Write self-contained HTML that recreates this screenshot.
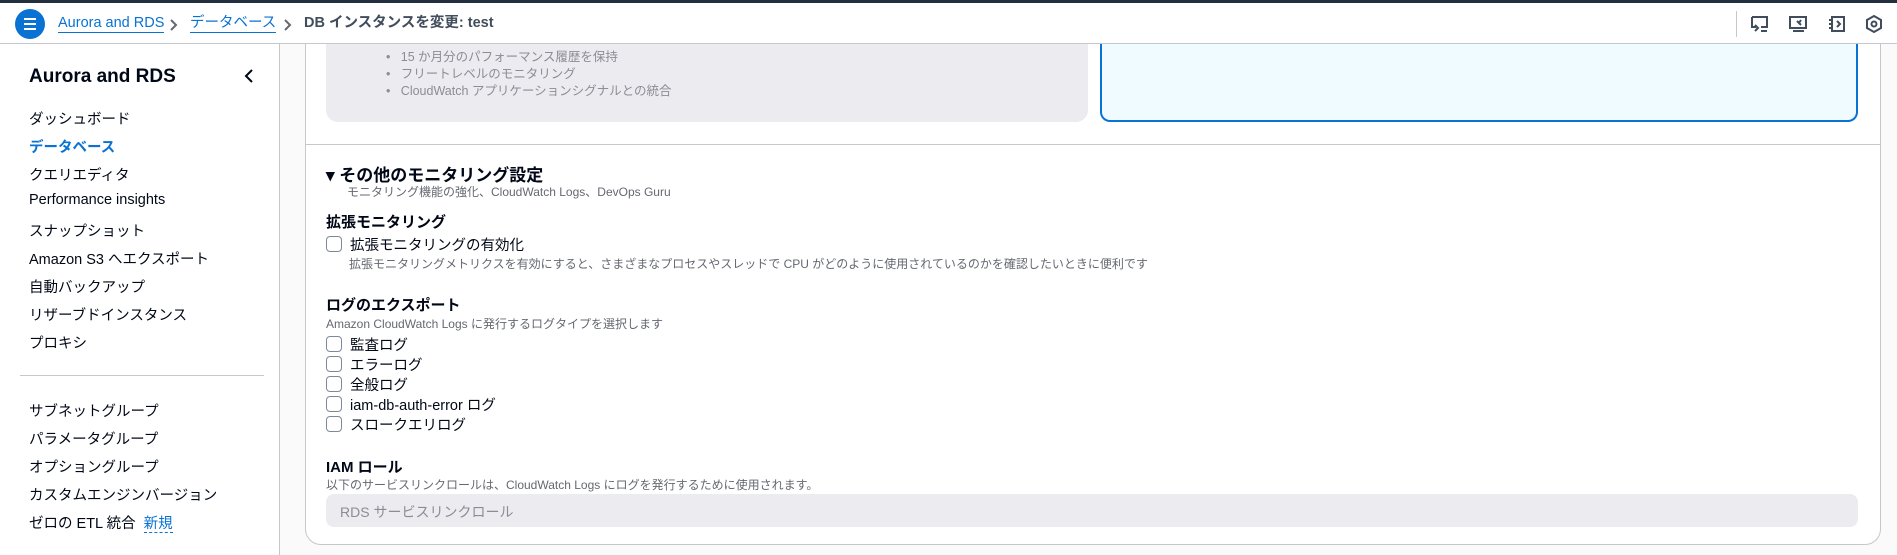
<!DOCTYPE html>
<html><head><meta charset="utf-8"><style>
*{box-sizing:border-box;margin:0;padding:0}
body{width:1897px;height:555px;overflow:hidden;background:#fafafa;font-family:"Liberation Sans","Noto Sans CJK JP",sans-serif;color:#000716;position:relative}
.a{position:absolute;white-space:nowrap}
.top{position:absolute;left:0;top:0;width:1897px;height:44px;background:#fff;border-top:3px solid #232f3e;border-bottom:1px solid #c6c6cd}
.side{position:absolute;left:0;top:44px;width:280px;height:511px;background:#fff;border-right:1px solid #c6c6cd}
.nav{font-size:14.5px;color:#000716;left:29px}
.card{position:absolute;left:305px;top:20px;width:1576px;height:525px;background:#fff;border:1px solid #c6c6cd;border-radius:16px}
.cb{position:absolute;left:326px;width:16px;height:16px;border:1.5px solid #7d8998;border-radius:4px;background:#fff}
.lbl{left:350px;font-size:14.5px}
.g{color:#656871;font-size:12px}
.h{font-weight:bold;font-size:15px;left:326px}
</style></head><body>
<div class="card"></div>
<div class="a" style="left:326px;top:20px;width:762px;height:102px;background:#ebebf0;border-radius:0 0 12px 12px"></div>
<div class="a" style="left:1100px;top:20px;width:758px;height:102px;background:#f0fbff;border:2px solid #0972d3;border-top:none;border-radius:0 0 10px 10px"></div>
<div class="a" style="left:386px;top:49px;font-size:12.5px;color:#8c8c94;line-height:17px">• &nbsp;&nbsp;15 か月分のパフォーマンス履歴を保持<br>• &nbsp;&nbsp;フリートレベルのモニタリング<br>• &nbsp;&nbsp;CloudWatch アプリケーションシグナルとの統合</div>
<div class="a" style="left:306px;top:144px;width:1574px;height:1px;background:#c6c6cd"></div>
<div class="a" style="left:326px;top:161px;font-size:17px;font-weight:bold">▾ その他のモニタリング設定</div>
<div class="a g" style="left:347px;top:183px">モニタリング機能の強化、CloudWatch Logs、DevOps Guru</div>
<div class="a h" style="top:211px">拡張モニタリング</div>
<div class="cb" style="top:236px"></div>
<div class="a lbl" style="top:234px">拡張モニタリングの有効化</div>
<div class="a g" style="left:349px;top:255px">拡張モニタリングメトリクスを有効にすると、さまざまなプロセスやスレッドで CPU がどのように使用されているのかを確認したいときに便利です</div>
<div class="a h" style="top:294px">ログのエクスポート</div>
<div class="a g" style="left:326px;top:315px">Amazon CloudWatch Logs に発行するログタイプを選択します</div>
<div class="cb" style="top:336px"></div><div class="a lbl" style="top:334px">監査ログ</div>
<div class="cb" style="top:356px"></div><div class="a lbl" style="top:354px">エラーログ</div>
<div class="cb" style="top:376px"></div><div class="a lbl" style="top:374px">全般ログ</div>
<div class="cb" style="top:396px"></div><div class="a lbl" style="top:394px">iam-db-auth-error ログ</div>
<div class="cb" style="top:416px"></div><div class="a lbl" style="top:414px">スロークエリログ</div>
<div class="a h" style="top:456px">IAM ロール</div>
<div class="a g" style="left:326px;top:476px">以下のサービスリンクロールは、CloudWatch Logs にログを発行するために使用されます。</div>
<div class="a" style="left:326px;top:494px;width:1532px;height:33px;background:#ebebf0;border-radius:8px"></div>
<div class="a" style="left:340px;top:502px;font-size:14px;color:#8c8c94">RDS サービスリンクロール</div>

<div class="side">
<div class="a" style="left:29px;top:22px;font-size:19px;font-weight:bold">Aurora and RDS</div>
<svg class="a" style="left:243px;top:24px" width="12" height="16"><path d="M9 2L3 8l6 6" stroke="#000716" stroke-width="2" fill="none"/></svg>
<div class="a nav" style="top:64px">ダッシュボード</div>
<div class="a nav" style="top:92px;color:#0972d3;font-weight:bold">データベース</div>
<div class="a nav" style="top:120px">クエリエディタ</div>
<div class="a nav" style="top:148px">Performance insights</div>
<div class="a nav" style="top:176px">スナップショット</div>
<div class="a nav" style="top:204px">Amazon S3 へエクスポート</div>
<div class="a nav" style="top:232px">自動バックアップ</div>
<div class="a nav" style="top:260px">リザーブドインスタンス</div>
<div class="a nav" style="top:288px">プロキシ</div>
<div class="a" style="left:20px;top:331px;width:244px;height:1px;background:#c6c6cd"></div>
<div class="a nav" style="top:356px">サブネットグループ</div>
<div class="a nav" style="top:384px">パラメータグループ</div>
<div class="a nav" style="top:412px">オプショングループ</div>
<div class="a nav" style="top:440px">カスタムエンジンバージョン</div>
<div class="a nav" style="top:468px">ゼロの ETL 統合 &nbsp;<span style="color:#0972d3;border-bottom:1px dashed #0972d3">新規</span></div>
</div>

<div class="top">
<div class="a" style="left:15px;top:6px;width:30px;height:30px;border-radius:50%;background:#0972d3"></div>
<svg class="a" style="left:22px;top:14px" width="16" height="14"><path d="M2 2h12M2 7h12M2 12h12" stroke="#fff" stroke-width="2"/></svg>
<div class="a" style="left:58px;top:11px;font-size:14.5px;color:#0972d3;border-bottom:1px solid #0972d3;line-height:18px">Aurora and RDS</div>
<svg class="a" style="left:169px;top:15px" width="10" height="14"><path d="M2 2l5 5-5 5" stroke="#656871" stroke-width="2" fill="none"/></svg>
<div class="a" style="left:190px;top:11px;font-size:14.5px;color:#0972d3;border-bottom:1px solid #0972d3;line-height:18px">データベース</div>
<svg class="a" style="left:283px;top:15px" width="10" height="14"><path d="M2 2l5 5-5 5" stroke="#656871" stroke-width="2" fill="none"/></svg>
<div class="a" style="left:304px;top:11px;font-size:14.5px;font-weight:bold;color:#414d5c;line-height:18px">DB インスタンスを変更: test</div>
<div class="a" style="left:1736px;top:8px;width:1px;height:26px;background:#c6c6cd"></div>
<svg class="a" style="left:1750px;top:12px" width="20" height="18" fill="none" stroke="#414d5c" stroke-width="2"><path d="M2 2h15v10h-6M2 2v10h4M5 10l3 3-3 3M11 16h6"/></svg>
<svg class="a" style="left:1788px;top:12px" width="20" height="18" fill="none" stroke="#414d5c" stroke-width="2"><path d="M2 2h16v11H2zM5 16h11M9 6l4 4M13 5l-2 3"/></svg>
<svg class="a" style="left:1827px;top:12px" width="20" height="18" fill="none" stroke="#414d5c" stroke-width="2"><path d="M5 2h12v14H5zM2 5h4M2 9h4M2 13h4M10 6l3 3-3 3"/></svg>
<svg class="a" style="left:1864px;top:12px" width="20" height="18" fill="none" stroke="#414d5c" stroke-width="2"><path d="M10 1l7 4v8l-7 4-7-4V5z"/><circle cx="10" cy="9" r="2.5"/></svg>
</div>
</body></html>
